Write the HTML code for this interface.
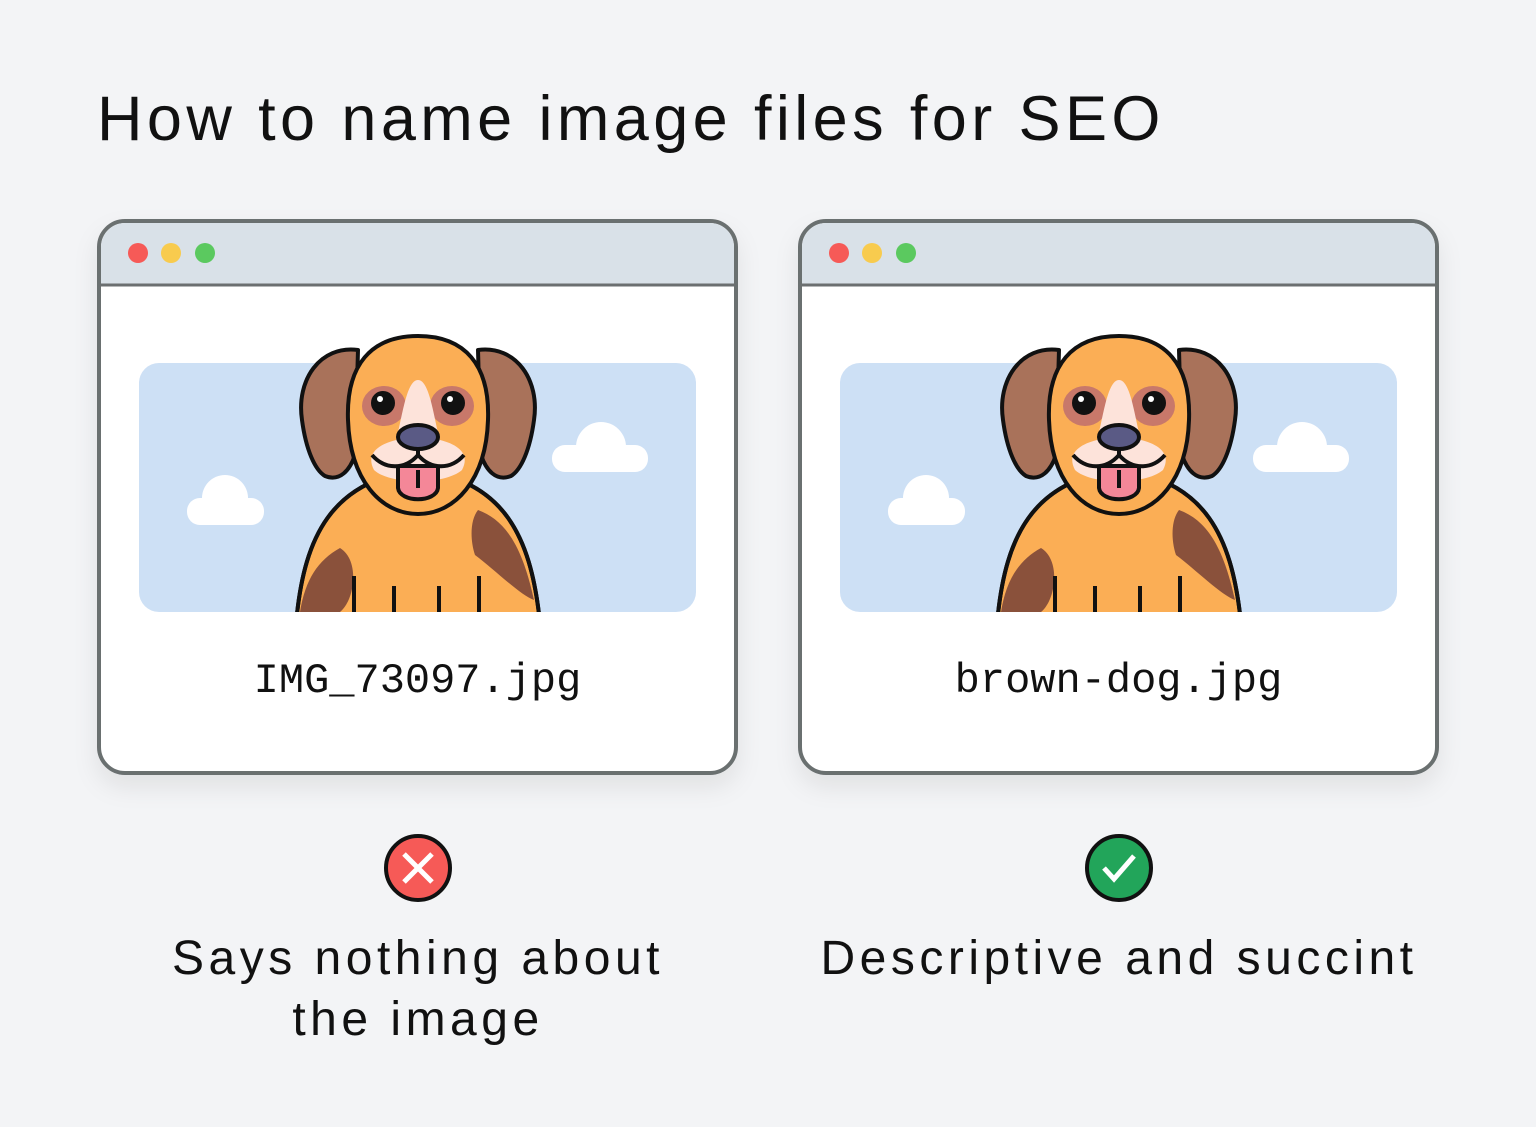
<!DOCTYPE html>
<html><head><style>
body{margin:0;width:1536px;height:1127px;background:#f3f4f6;position:relative;overflow:hidden;font-family:"Liberation Sans",sans-serif;color:#111}
.t{position:absolute;left:97px;top:83px;font-size:63px;white-space:nowrap;letter-spacing:4.4px}
.fn{position:absolute;width:641px;text-align:center;font-family:"Liberation Mono",monospace;font-size:42px;top:657px}
.cap{position:absolute;width:700px;text-align:center;font-size:48px;line-height:61px;top:928px;letter-spacing:4.5px}
</style></head><body>
<div class="t">How to name image files for SEO</div>
<svg width="1536" height="1127" style="position:absolute;left:0;top:0">
<defs>
<filter id="sh" x="-10%" y="-10%" width="120%" height="130%"><feDropShadow dx="0" dy="12" stdDeviation="12" flood-color="#000" flood-opacity="0.08"/></filter>
<g id="win">
<rect x="99" y="221" width="637" height="552" rx="26" fill="#fff" stroke="#6b6f70" stroke-width="4" filter="url(#sh)"/>
<path d="M101 285 V247 a24 24 0 0 1 24 -24 H710 a24 24 0 0 1 24 24 V285 Z" fill="#d9e1e8"/>
<line x1="99" y1="285" x2="736" y2="285" stroke="#6b6f70" stroke-width="3"/>
<circle cx="138" cy="253" r="10" fill="#f65a57"/><circle cx="171" cy="253" r="10" fill="#f8cb4e"/><circle cx="205" cy="253" r="10" fill="#5bc95f"/>
<clipPath id="cp"><rect x="139" y="363" width="557" height="249" rx="20"/></clipPath>
<rect x="139" y="363" width="557" height="249" rx="20" fill="#cde0f5"/>
<g fill="#fff"><circle cx="225" cy="498" r="23"/><rect x="187" y="498" width="77" height="27" rx="13"/>
<circle cx="601" cy="447" r="25"/><rect x="552" y="445" width="96" height="27" rx="13"/></g>
<g clip-path="url(#cp)" stroke="#111" stroke-width="4" stroke-linejoin="round">
<path d="M297 614 C305 540 330 480 418 470 C506 480 530 540 539 614 Z" fill="#fbae55"/>
<path d="M300 612 C305 580 318 560 340 548 C360 560 355 600 340 612 Z" fill="#8a513b" stroke="none"/>
<path d="M478 510 C505 520 522 545 534 600 C520 595 495 570 475 555 C470 540 470 520 478 510 Z" fill="#8a513b" stroke="none"/>
<path d="M297 614 C305 540 330 480 418 470 C506 480 530 540 539 614" fill="none"/>
<g stroke-width="4"><line x1="354" y1="576" x2="354" y2="614"/><line x1="394" y1="586" x2="394" y2="614"/><line x1="439" y1="586" x2="439" y2="614"/><line x1="479" y1="576" x2="479" y2="614"/></g>
</g>
<g stroke="#111" stroke-width="4" stroke-linejoin="round">
<path d="M358 350 C320 345 296 380 302 420 C306 450 315 470 325 476 C340 482 350 470 355 455 Z" fill="#a9725a"/>
<path d="M478 350 C516 345 540 380 534 420 C530 450 521 470 511 476 C496 482 486 470 481 455 Z" fill="#a9725a"/>
<path d="M418 336 C465 336 490 365 488 420 C486 480 455 514 418 514 C381 514 350 480 348 420 C346 365 371 336 418 336 Z" fill="#fbae55"/>
<ellipse cx="384" cy="406" rx="22" ry="20" fill="#c8786a" stroke="none"/>
<ellipse cx="452" cy="406" rx="22" ry="20" fill="#c8786a" stroke="none"/>
<path d="M418 380 C430 380 434 420 440 440 C460 445 470 455 462 470 C445 485 390 485 374 470 C366 455 376 445 396 440 C402 420 406 380 418 380 Z" fill="#fde3da" stroke="none"/>
<circle cx="383" cy="403" r="10" fill="#111"/><circle cx="380" cy="399" r="3" fill="#fff" stroke="none"/>
<circle cx="453" cy="403" r="10" fill="#111"/><circle cx="450" cy="399" r="3" fill="#fff" stroke="none"/>
<path d="M398 466 L398 488 C400 503 436 503 438 488 L438 466 Z" fill="#f48798"/>
<path d="M418 470 V488" fill="none"/>
<path d="M372 455 C385 470 405 470 418 455 C431 470 451 470 464 455" fill="#fde3da"/>
<path d="M418 446 V456" fill="none"/>
<ellipse cx="418" cy="437" rx="20" ry="12" fill="#5a5a85"/>
</g>
</g>
</defs>
<use href="#win"/>
<use href="#win" x="701"/>
<circle cx="418" cy="868" r="32" fill="#f65a57" stroke="#111" stroke-width="4"/>
<path d="M404 854 L432 882 M432 854 L404 882" stroke="#fff" stroke-width="5"/>
<circle cx="1119" cy="868" r="32" fill="#22a55a" stroke="#111" stroke-width="4"/>
<path d="M1104 868 L1114 879 L1134 856" stroke="#fff" stroke-width="5" fill="none"/>
</svg>
<div class="fn" style="left:97px">IMG_73097.jpg</div>
<div class="fn" style="left:798px">brown-dog.jpg</div>
<div class="cap" style="left:68px">Says nothing about<br>the image</div>
<div class="cap" style="left:769px">Descriptive and succint</div>
</body></html>
